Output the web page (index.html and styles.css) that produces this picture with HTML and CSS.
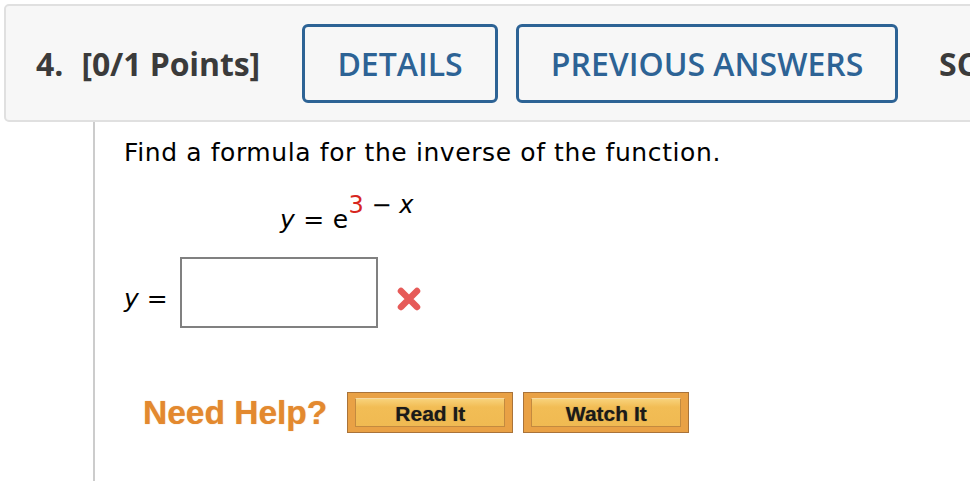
FILE: index.html
```html
<!DOCTYPE html>
<html>
<head>
<meta charset="utf-8">
<link rel="stylesheet" href="styles.css">
</head>
<body>
<div class="header">
  <div class="qnum">4.</div>
  <div class="points">[0/1 Points]</div>
  <div class="hbtn details">DETAILS</div>
  <div class="hbtn prev">PREVIOUS ANSWERS</div>
  <div class="score">SC</div>
</div>
<div class="content">
  <p class="question">Find a formula for the inverse of the function.</p>
  <div class="equation"><i>y</i> = e<sup><span class="red">3</span> &minus; <i>x</i></sup></div>
  <div class="answer">
    <span class="lhs"><i>y</i> =</span>
    <span class="box"></span>
    <svg class="wrong" width="30" height="30" viewBox="0 0 30 30"><path d="M7 7 L23 23 M23 7 L7 23" stroke="#e65a58" stroke-width="6.5" stroke-linecap="round" fill="none"/></svg>
  </div>
  <div class="help">
    <span class="needhelp">Need Help?</span>
    <span class="obtn"><span class="inner">Read It</span></span>
    <span class="obtn"><span class="inner">Watch It</span></span>
  </div>
</div>
</body>
</html>
```
FILE: styles.css
```css
html, body {
  margin: 0;
  padding: 0;
  background: #fff;
  overflow: hidden;
}
body {
  width: 970px;
  height: 481px;
}
.header {
  box-sizing: border-box;
  margin: 4px 0 0 4px;
  width: 1100px;
  height: 118px;
  background: #f7f7f7;
  border: 2px solid #e0e0e0;
  border-radius: 5px;
  display: flex;
  align-items: center;
  padding-left: 30px;
  font-family: "Open Sans", sans-serif;
}
.qnum, .points, .score {
  font-weight: 700;
  font-size: 32px;
  color: #3b3b3b;
}
.points {
  margin-left: 18px;
  letter-spacing: -0.1px;
}
.hbtn {
  box-sizing: border-box;
  height: 79px;
  display: flex;
  align-items: center;
  justify-content: center;
  border: 3px solid #2d6395;
  border-radius: 6px;
  color: #2d6395;
  font-size: 32px;
  font-weight: 600;
  padding: 0;
  margin-top: 1px;
  white-space: nowrap;
}
.details {
  margin-left: 42px;
  width: 196px;
}
.prev {
  margin-left: 18px;
  width: 382px;
}
.score {
  margin-left: 41px;
  white-space: nowrap;
}
.content {
  margin-left: 93px;
  border-left: 2px solid #cccccc;
  height: 359px;
  box-sizing: border-box;
  padding: 17px 0 0 29px;
  font-family: "DejaVu Sans", Verdana, sans-serif;
  color: #000;
}
.question {
  margin: 0;
  font-size: 25px;
  line-height: 28px;
  letter-spacing: 0.6px;
}
.equation {
  margin: 38px 0 0 156px;
  font-size: 25px;
  line-height: 28px;
  letter-spacing: 0.3px;
}
.equation sup {
  font-size: 24px;
  line-height: 0;
  vertical-align: 15px;
  letter-spacing: 0;
}
.red {
  color: #d7261e;
}
.answer {
  margin-top: 23px;
  display: flex;
  align-items: center;
  font-size: 25px;
}
.lhs {
  margin-top: 12px;
  width: 56px;
}
.box {
  box-sizing: border-box;
  width: 198px;
  height: 71px;
  border: 2px solid #808080;
  background: #fff;
}
.wrong {
  margin: 12px 0 0 16px;
  filter: blur(0.7px);
}
.help {
  margin-top: 64px;
  margin-left: 19px;
  display: flex;
  align-items: center;
  font-family: "Liberation Sans", Arial, sans-serif;
}
.needhelp {
  font-size: 33.5px;
  font-weight: 700;
  color: #e3892f;
  text-shadow: 0 0 1px rgba(227,137,47,0.7);
  margin-right: 20px;
}
.obtn {
  box-sizing: border-box;
  width: 166px;
  height: 41px;
  border: 1px solid #a9733a;
  background: #e9a145;
  padding: 5px 7px;
  display: flex;
  margin-right: 10px;
}
.inner {
  flex: 1;
  display: flex;
  align-items: center;
  justify-content: center;
  padding-top: 3px;
  border: 1px solid #c38a3f;
  border-top-color: #f7d9a0;
  background: linear-gradient(#f8d27a, #f2bd55 30%, #f0ba52);
  font-size: 21px;
  font-weight: 700;
  color: #1a1a1a;
  text-shadow: 0 0 1px rgba(0,0,0,0.5);
}
```
